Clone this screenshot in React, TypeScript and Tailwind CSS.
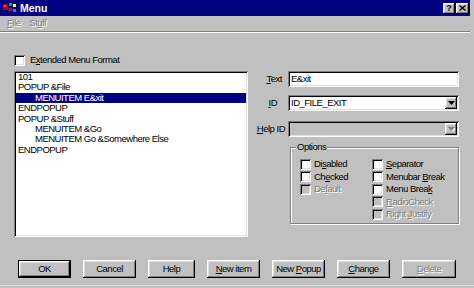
import React from "react";

const raised =
  "shadow-[inset_-1px_-1px_0_#000,inset_1px_1px_0_#fff,inset_-2px_-2px_0_#808080,inset_2px_2px_0_#dfdfdf]";
const sunken =
  "shadow-[inset_1px_1px_0_#808080,inset_-1px_-1px_0_#fff,inset_2px_2px_0_#000,inset_-2px_-2px_0_#dfdfdf]";
const dis = "text-[#808080] [text-shadow:1px_1px_0_#fff]";

function U({ children }: { children: React.ReactNode }) {
  return <span className="underline underline-offset-[1px]">{children}</span>;
}

function Check({
  label,
  disabled,
}: {
  label: React.ReactNode;
  disabled?: boolean;
}) {
  return (
    <div className="flex items-center">
      <div
        className={`w-[11px] h-[11px] shrink-0 ${sunken} ${
          disabled ? "bg-[#c0c0c0]" : "bg-white"
        }`}
      />
      <span className={`ml-[3px] whitespace-nowrap ${disabled ? dis : ""}`}>
        {label}
      </span>
    </div>
  );
}

function Arrow({ disabled }: { disabled?: boolean }) {
  return (
    <svg width="7" height="4" viewBox="0 0 7 4">
      {disabled && <polygon points="1,1 8,1 4.5,5" fill="#fff" />}
      <polygon points="0,0 7,0 3.5,4" fill={disabled ? "#808080" : "#000"} />
    </svg>
  );
}

function Btn({
  w,
  children,
  def,
  disabled,
}: {
  w: string;
  children: React.ReactNode;
  def?: boolean;
  disabled?: boolean;
}) {
  return (
    <div
      className={`${w} h-[18px] ${def ? "border border-black" : ""} flex`}
    >
      <div
        className={`flex-1 flex items-center justify-center ${raised} ${
          disabled ? dis : ""
        }`}
      >
        <span className="whitespace-nowrap">{children}</span>
      </div>
    </div>
  );
}

export default function App() {
  const rows: { t: React.ReactNode; indent?: boolean; sel?: boolean }[] = [
    { t: "101" },
    { t: "POPUP &File" },
    { t: "MENUITEM E&xit", indent: true, sel: true },
    { t: "ENDPOPUP" },
    { t: "POPUP &Stuff" },
    { t: "MENUITEM &Go", indent: true },
    { t: "MENUITEM Go &Somewhere Else", indent: true },
    { t: "ENDPOPUP" },
  ];

  return (
    <div className="w-[474px] h-[288px] bg-[#c0c0c0] overflow-hidden flex flex-col font-['Liberation_Sans',Arial,sans-serif] text-[9.5px] tracking-[-0.5px] leading-[10.4px] text-black">
      {/* title bar */}
      <div className="h-[16px] w-[470px] bg-[#000080] flex items-center shrink-0">
        <svg width="14" height="12" viewBox="0 0 14 12" className="ml-[3px]">
          <rect x="0" y="2" width="5" height="6" fill="#c00000" />
          <rect x="1" y="3" width="2" height="2" fill="#ff4040" />
          <rect x="6" y="1" width="3" height="3" fill="#00c000" />
          <rect x="6" y="6" width="3" height="3" fill="#e00000" />
          <rect x="10" y="2" width="3" height="3" fill="#ffff00" />
          <rect x="10" y="7" width="3" height="3" fill="#00a0a0" />
        </svg>
        <span className="ml-[3px] text-white font-bold text-[10.5px] tracking-[0px]">
          Menu
        </span>
        <div className="flex-1" />
        <div
          className={`w-[12px] h-[11px] bg-[#c0c0c0] ${raised} flex items-center justify-center font-bold text-[9px] leading-none tracking-[0px]`}
        >
          ?
        </div>
        <div
          className={`ml-[1px] mr-[1px] w-[13px] h-[11px] bg-[#c0c0c0] ${raised} flex items-center justify-center`}
        >
          <svg width="7" height="6" viewBox="0 0 7 6">
            <path d="M0.5 0.5 L6.5 5.5 M6.5 0.5 L0.5 5.5" stroke="#000" strokeWidth="1.4" />
          </svg>
        </div>
      </div>

      {/* menu bar */}
      <div className={`h-[15px] flex items-center shrink-0 ${dis}`}>
        <span className="ml-[7px]">
          <U>F</U>ile
        </span>
        <span className="ml-[9px]">
          St<U>u</U>ff
        </span>
      </div>
      <div className="h-[2px] w-[470px] border-t border-[#808080] border-b border-b-white shrink-0" />

      {/* content */}
      <div className="flex-1 flex flex-col pl-[14px]">
        <div className="mt-[22px] h-[11px] flex items-center">
          <div className={`w-[11px] h-[11px] bg-white ${sunken}`} />
          <span className="ml-[5px]">
            E<U>x</U>tended Menu Format
          </span>
        </div>

        <div className="mt-[5px] flex">
          <div className={`w-[234px] h-[166px] bg-white ${sunken} p-[2px] pt-[1px]`}>
            {rows.map((r, i) => (
              <div
                key={i}
                className={`h-[10.4px] whitespace-nowrap ${
                  r.indent ? "pl-[19px]" : "pl-[2px]"
                } ${r.sel ? "bg-[#000080] text-white" : ""}`}
              >
                {r.t}
              </div>
            ))}
          </div>

          <div className="flex flex-col w-[211px]">
            <div className="h-[16px] flex items-center">
              <span className="w-[37px] text-right pr-[3px]">
                <U>T</U>ext
              </span>
              <div
                className={`ml-[3px] w-[171px] h-[16px] bg-white ${sunken} flex items-center pl-[3px]`}
              >
                E&amp;xit
              </div>
            </div>

            <div className="mt-[8px] h-[16px] flex items-center">
              <span className="w-[37px] text-right pr-[8px]">
                <U>I</U>D
              </span>
              <div
                className={`ml-[3px] w-[171px] h-[16px] bg-white ${sunken} flex items-center pl-[3px] pr-[2px]`}
              >
                <span className="flex-1">ID_FILE_EXIT</span>
                <div
                  className={`w-[12px] h-[12px] bg-[#c0c0c0] ${raised} flex items-center justify-center`}
                >
                  <Arrow />
                </div>
              </div>
            </div>

            <div className="mt-[10px] h-[16px] flex items-center">
              <span className="w-[37px] text-right">
                <U>H</U>elp ID
              </span>
              <div
                className={`ml-[3px] w-[171px] h-[16px] bg-[#c0c0c0] ${sunken} flex items-center justify-end pr-[2px]`}
              >
                <div
                  className={`w-[12px] h-[12px] bg-[#c0c0c0] ${raised} flex items-center justify-center`}
                >
                  <Arrow disabled />
                </div>
              </div>
            </div>

            <div className="mt-[10px] ml-[42px] w-[169px] h-[77px] relative border border-[#808080] shadow-[inset_1px_1px_0_#fff,1px_1px_0_#fff]">
              <span className="absolute -top-[6px] left-[5px] bg-[#c0c0c0] px-[1px]">
                Options
              </span>
              <div className="pl-[9px] pt-[10px] grid grid-cols-[72px_1fr] auto-rows-[12.5px]">
                <Check label={<>Di<U>s</U>abled</>} />
                <Check label={<><U>S</U>eparator</>} />
                <Check label={<>Ch<U>e</U>cked</>} />
                <Check label={<>Menubar <U>B</U>reak</>} />
                <Check label={<>De<U>f</U>ault</>} disabled />
                <Check label={<>Menu Brea<U>k</U></>} />
                <div />
                <Check label={<><U>R</U>adioCheck</>} disabled />
                <div />
                <Check label={<>Right <U>J</U>ustify</>} disabled />
              </div>
            </div>
          </div>
        </div>

        <div className="mt-[23px] ml-[4px] flex gap-[12px]">
          <Btn w="w-[53px]" def>
            OK
          </Btn>
          <Btn w="w-[53px]">Cancel</Btn>
          <Btn w="w-[47px]">Help</Btn>
          <Btn w="w-[53px]">
            <U>N</U>ew item
          </Btn>
          <Btn w="w-[53px]">
            New <U>P</U>opup
          </Btn>
          <Btn w="w-[53px]">
            <U>C</U>hange
          </Btn>
          <Btn w="w-[54px]" disabled>
            <U>D</U>elete
          </Btn>
        </div>
      </div>
      <div className="h-[3px] border-t border-[#dfdfdf] shrink-0" />
    </div>
  );
}
